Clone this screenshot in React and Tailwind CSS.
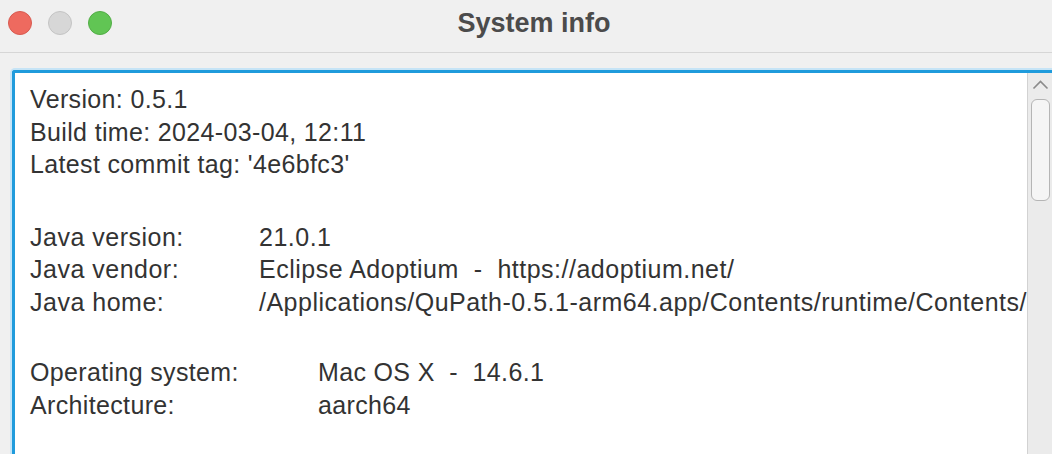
export default function App() {
    const font = { fontFamily: '"Liberation Sans", Arial, sans-serif' }

    // label / value rows, grouped the way the dialog shows them
    const javaRows = [
        ["Java version:", "21.0.1"],
        ["Java vendor:", "Eclipse Adoptium  -  https://adoptium.net/"],
        ["Java home:", "/Applications/QuPath-0.5.1-arm64.app/Contents/runtime/Contents/"],
    ]
    const osRows = [
        ["Operating system:", "Mac OS X  -  14.6.1"],
        ["Architecture:", "aarch64"],
    ]

    return (
        <div className="w-[1052px] h-[454px] overflow-hidden bg-[#f0f0f0] flex flex-col" style={font}>
            {/* Title bar */}
            <div className="relative h-[53px] shrink-0 border-b border-[#d6d6d6] flex items-center justify-center">
                <div className="absolute left-[8px] top-[11px] flex gap-[16px]">
                    <span className="w-[24px] h-[24px] rounded-full bg-[#ee6a5f] border border-[#d85a50]" />
                    <span className="w-[24px] h-[24px] rounded-full bg-[#d7d7d7] border border-[#c4c4c4]" />
                    <span className="w-[24px] h-[24px] rounded-full bg-[#61c554] border border-[#52ad46]" />
                </div>
                <span className="pl-[16px] pb-[6px] text-[27px] font-bold text-[#4b4b4b]">System info</span>
            </div>

            {/* Text area */}
            <div className="flex-1 pl-[12px] pt-[17px]">
                <div className="h-full flex border-[3px] border-r-0 border-b-0 border-[#1f9bdc] shadow-[0_0_0_2px_#c6e4f6] rounded-tl-[3px] bg-white">
                    <div className="flex-1 overflow-hidden whitespace-pre pl-[15px] pt-[10px] text-[25px] leading-[32.5px] tracking-[0.35px] text-[#333333]">
                        <div>Version: 0.5.1</div>
                        <div>Build time: 2024-03-04, 12:11</div>
                        <div>Latest commit tag: '4e6bfc3'</div>

                        <div className="mt-[40px] tracking-[0.5px]">
                            {javaRows.map(([label, value]) => (
                                <div key={label} className="flex">
                                    <span className="w-[229px] shrink-0">{label}</span>
                                    <span>{value}</span>
                                </div>
                            ))}
                        </div>

                        <div className="mt-[38px]">
                            {osRows.map(([label, value]) => (
                                <div key={label} className="flex">
                                    <span className="w-[288px] shrink-0">{label}</span>
                                    <span>{value}</span>
                                </div>
                            ))}
                        </div>
                    </div>

                    {/* Scrollbar */}
                    <div className="w-[25px] shrink-0 bg-[#ebebeb] border-l border-[#d2d2d2] flex flex-col items-center pt-[7px]">
                        <svg width="17" height="10" viewBox="0 0 17 10" fill="none">
                            <path d="M1.5 8.5 L8.5 1.5 L15.5 8.5" stroke="#8a8a8a" strokeWidth="1.6" />
                        </svg>
                        <div className="mt-[9px] w-[19px] h-[102px] rounded-[6px] border border-[#b5b5b5] bg-[#f5f5f5]" />
                    </div>
                </div>
            </div>
        </div>
    )
}
